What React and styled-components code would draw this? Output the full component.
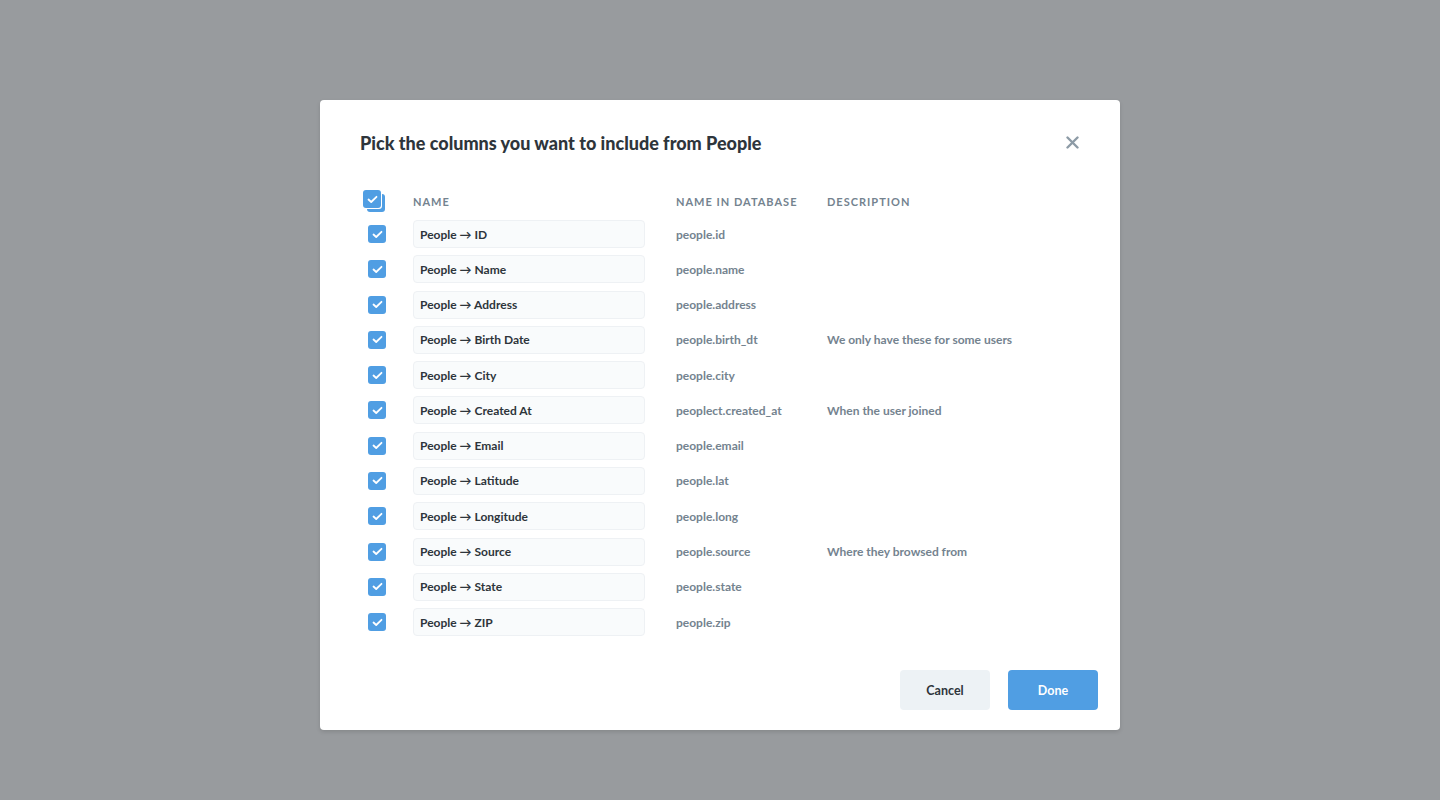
import styled, { createGlobalStyle } from 'styled-components'

const Global = createGlobalStyle`
html, body {
  margin: 0;
  padding: 0;
  height: 100%;
}
body {
  font-family: Lato, 'Open Sans', sans-serif;
  -webkit-font-smoothing: antialiased;
}
`

const Overlay = styled.div`
width: 1440px;
height: 800px;
background: #989b9e;
display: flex;
justify-content: center;
align-items: flex-start;
padding-top: 100px;
box-sizing: border-box;
`

const Modal = styled.div`
width: 800px;
height: 630px;
background: #fff;
border-radius: 4px;
box-shadow: 0 2px 4px rgba(0,0,0,0.12);
box-sizing: border-box;
padding: 31px 22px 20px 40px;
display: flex;
flex-direction: column;
position: relative;
`

const Title = styled.h2`
margin: 0;
font-size: 18px;
line-height: 24px;
font-weight: 900;
color: #2e353b;
`

const Close = styled.button`
position: absolute;
top: 34px;
right: 40px;
width: 16px;
height: 16px;
padding: 0;
border: none;
background: none;
cursor: pointer;
display: flex;
align-items: center;
justify-content: center;
`

const Table = styled.div`
margin-top: 32px;
display: grid;
grid-template-columns: 53px 263px 151px 1fr;
`

const HeadCell = styled.div`
height: 28px;
display: flex;
align-items: center;
font-size: 11px;
font-weight: 700;
letter-spacing: 1px;
text-transform: uppercase;
color: #74838f;
margin-bottom: 1.5px;
`

const Cell = styled.div`
height: 35.27px;
display: flex;
align-items: center;
font-size: 12px;
font-weight: 700;
color: #74838f;
`

const Check = styled.span`
width: 18px;
height: 18px;
border-radius: 3px;
background: #509ee3;
display: flex;
align-items: center;
justify-content: center;
margin-left: 8px;
position: relative;
box-sizing: border-box;
`

const StackedCheck = styled(Check)`
margin-left: 3px;
margin-top: -4px;
box-shadow: 1px 1px 0 0 #fff, 4px 4px 0 0 #509ee3;
`

const NameBox = styled.div`
width: 232px;
height: 28px;
box-sizing: border-box;
border: 1px solid #eef1f4;
border-radius: 4px;
background: #f9fbfc;
display: flex;
align-items: center;
padding-left: 6px;
font-size: 12px;
font-weight: 700;
color: #2e353b;
`

const Footer = styled.div`
margin-top: auto;
display: flex;
justify-content: flex-end;
gap: 18px;
`

const Button = styled.button`
width: 90px;
height: 40px;
border: none;
border-radius: 4px;
font-family: Lato, sans-serif;
font-size: 12.5px;
font-weight: 700;
cursor: pointer;
background: ${p => (p.$primary ? '#509ee3' : '#edf2f5')};
color: ${p => (p.$primary ? '#fff' : '#2e353b')};
`

const Tick = () => (
  <svg width="11" height="9" viewBox="0 0 11 9" fill="none">
    <path d="M1.5 4.5 L4.2 7 L9.5 1.8" stroke="#fff" strokeWidth="1.8" strokeLinecap="round" strokeLinejoin="round" />
  </svg>
)

const columns = [
  ['ID', 'people.id', ''],
  ['Name', 'people.name', ''],
  ['Address', 'people.address', ''],
  ['Birth Date', 'people.birth_dt', 'We only have these for some users'],
  ['City', 'people.city', ''],
  ['Created At', 'peoplect.created_at', 'When the user joined'],
  ['Email', 'people.email', ''],
  ['Latitude', 'people.lat', ''],
  ['Longitude', 'people.long', ''],
  ['Source', 'people.source', 'Where they browsed from'],
  ['State', 'people.state', ''],
  ['ZIP', 'people.zip', ''],
]

export default function App() {
  return (
    <>
      <Global />
      <Overlay>
        <Modal>
          <Title>Pick the columns you want to include from People</Title>
          <Close aria-label="Close">
            <svg width="13" height="13" viewBox="0 0 13 13">
              <path d="M1.5 1.5 L11.5 11.5 M11.5 1.5 L1.5 11.5" stroke="#8d9ba6" strokeWidth="2.4" strokeLinecap="round" />
            </svg>
          </Close>
          <Table>
            <HeadCell>
              <StackedCheck><Tick /></StackedCheck>
            </HeadCell>
            <HeadCell>Name</HeadCell>
            <HeadCell>Name in database</HeadCell>
            <HeadCell>Description</HeadCell>
            {columns.map(([name, db, desc]) => (
              <>
                <Cell key={name + 'c'}><Check><Tick /></Check></Cell>
                <Cell key={name + 'n'}><NameBox>People → {name}</NameBox></Cell>
                <Cell key={name + 'd'}>{db}</Cell>
                <Cell key={name + 'x'}>{desc}</Cell>
              </>
            ))}
          </Table>
          <Footer>
            <Button>Cancel</Button>
            <Button $primary>Done</Button>
          </Footer>
        </Modal>
      </Overlay>
    </>
  )
}
